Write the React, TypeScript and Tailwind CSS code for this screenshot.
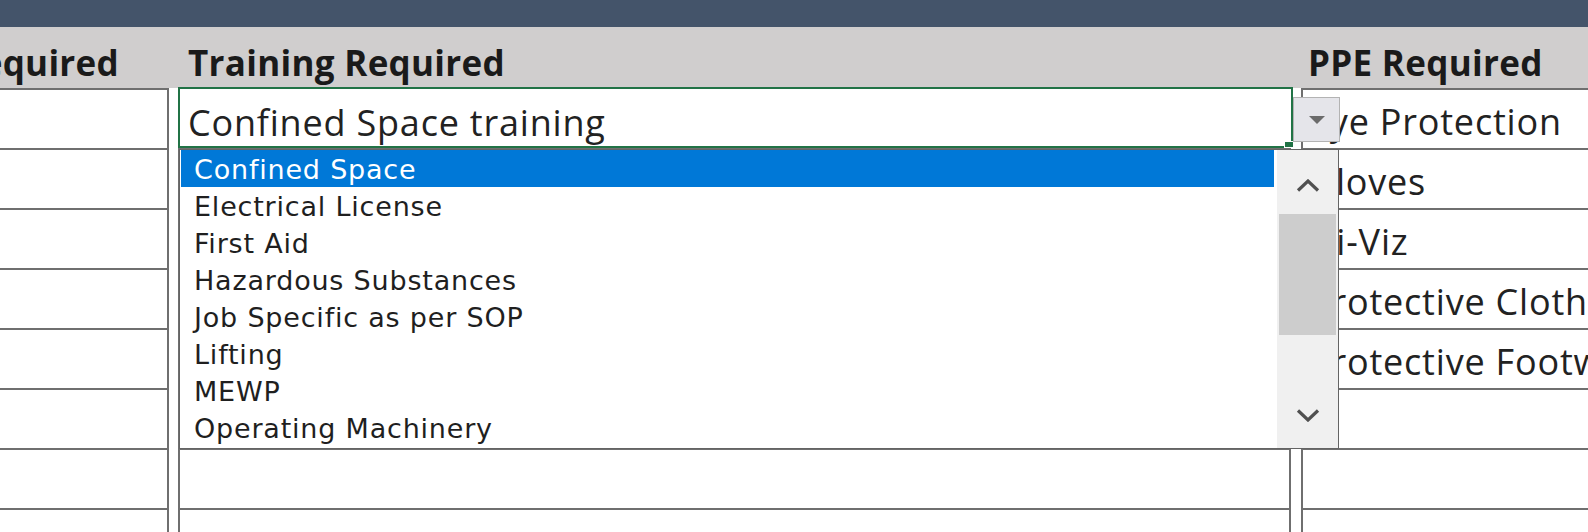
import type { ReactNode } from 'react';

// Options shown in the open validation list
const trainingOptions = [
	'Confined Space',
	'Electrical License',
	'First Aid',
	'Hazardous Substances',
	'Job Specific as per SOP',
	'Lifting',
	'MEWP',
	'Operating Machinery',
];

const ppeValues = ['Eye Protection', 'Gloves', 'Hi-Viz', 'Protective Clothing', 'Protective Footwear', '', '', ''];

const rowCount = 8;

const App = () => {
	return (
		<div className="h-[532px] w-[1588px] overflow-hidden bg-white font-['Open_Sans',sans-serif] text-[#222]">
			<div className="h-[27px] bg-[#44546a]" />

			{/* header row */}
			<div className="flex h-[61px] bg-[#d0cece] text-[35px] font-bold leading-none tracking-[0.3px] text-[#1a1a1a]">
				<div className="flex w-[169px] shrink-0 justify-end overflow-hidden pr-[50px] pt-[18px]">
					<span className="shrink-0 whitespace-nowrap">Permit Required</span>
				</div>
				<div className="ml-[9px] w-[1113px] shrink-0 whitespace-nowrap pl-[10px] pt-[18px]">Training Required</div>
				<div className="ml-[10px] whitespace-nowrap pl-[7px] pt-[18px]">PPE Required</div>
			</div>

			{/* body */}
			<div className="flex">
				<div className="w-[169px] shrink-0 border-r-2 border-[#6f6f6f]">
					{Array.from({ length: rowCount }).map((_, i) => (
						<div key={i} className="h-[60px] border-t-2 border-[#6f6f6f]" />
					))}
				</div>

				<div className="relative ml-[9px] w-[1113px] shrink-0">
					<div className="-mt-[1px] mr-[-2px] h-[61px] whitespace-nowrap border-2 border-[#217346] pl-[8px] pt-[16px] text-[36px] leading-none tracking-[0.8px]">
						Confined Space training
					</div>
					{Array.from({ length: rowCount - 1 }).map((_, i) => (
						<div key={i} className="h-[60px] border-x-2 border-t-2 border-[#6f6f6f]" />
					))}

					{/* fill handle */}
					<div className="absolute left-[1106px] top-[53px] h-[7px] w-[10px] border border-white bg-[#217346]" />

					<DropdownButton />
					<DropdownList />
				</div>

				<div className="ml-[10px] flex-1 border-l-2 border-[#6f6f6f]">
					{ppeValues.map((value, i) => (
						<Cell key={i}>{value}</Cell>
					))}
				</div>
			</div>
		</div>
	);
};

export default App;

const Cell = ({ children }: { children: ReactNode }) => {
	return (
		<div className="h-[60px] whitespace-nowrap border-t-2 border-[#6f6f6f] pl-[6px] pt-[14px] text-[36px] leading-none tracking-[0.8px]">
			{children}
		</div>
	);
};

const DropdownButton = () => {
	return (
		<div className="absolute left-[1115px] top-[9px] z-20 flex h-[45px] w-[47px] items-center justify-center border border-[#b3b3b3] bg-[#e5e5ea]">
			<svg width="16" height="8" viewBox="0 0 16 8">
				<polygon points="0,0 16,0 8,8" fill="#6b6b6b" />
			</svg>
		</div>
	);
};

const Chevron = ({ up }: { up?: boolean }) => {
	return (
		<svg width="24" height="13" viewBox="0 0 24 13">
			<polyline
				points={up ? '2,11.5 12,2 22,11.5' : '2,1.5 12,11 22,1.5'}
				fill="none"
				stroke="#505050"
				strokeWidth="3.2"
			/>
		</svg>
	);
};

const DropdownList = () => {
	return (
		<div className="absolute left-[1px] top-[61px] z-10 flex h-[300px] w-[1160px] border border-[#646464] bg-white font-['DejaVu_Sans',sans-serif] text-[27px] tracking-[0.8px] text-[#1f1f1f]">
			<div className="flex-1">
				{trainingOptions.map((option, i) => (
					<div
						key={option}
						className={
							i === 0
								? 'ml-[1px] mr-[3px] h-[37px] whitespace-nowrap bg-[#0078d7] pl-[13px] pt-[3px] leading-[33px] text-white'
								: 'ml-[1px] mr-[3px] h-[37px] whitespace-nowrap pl-[13px] pt-[3px] leading-[33px]'
						}
					>
						{option}
					</div>
				))}
			</div>
			<div className="flex w-[61px] flex-col bg-[#f0f0f0]">
				<div className="flex h-[64px] justify-center pt-[29px]">
					<Chevron up />
				</div>
				<div className="mx-[2px] h-[121px] bg-[#cdcdcd]" />
				<div className="flex flex-1 items-end justify-center pb-[26px]">
					<Chevron />
				</div>
			</div>
		</div>
	);
};
